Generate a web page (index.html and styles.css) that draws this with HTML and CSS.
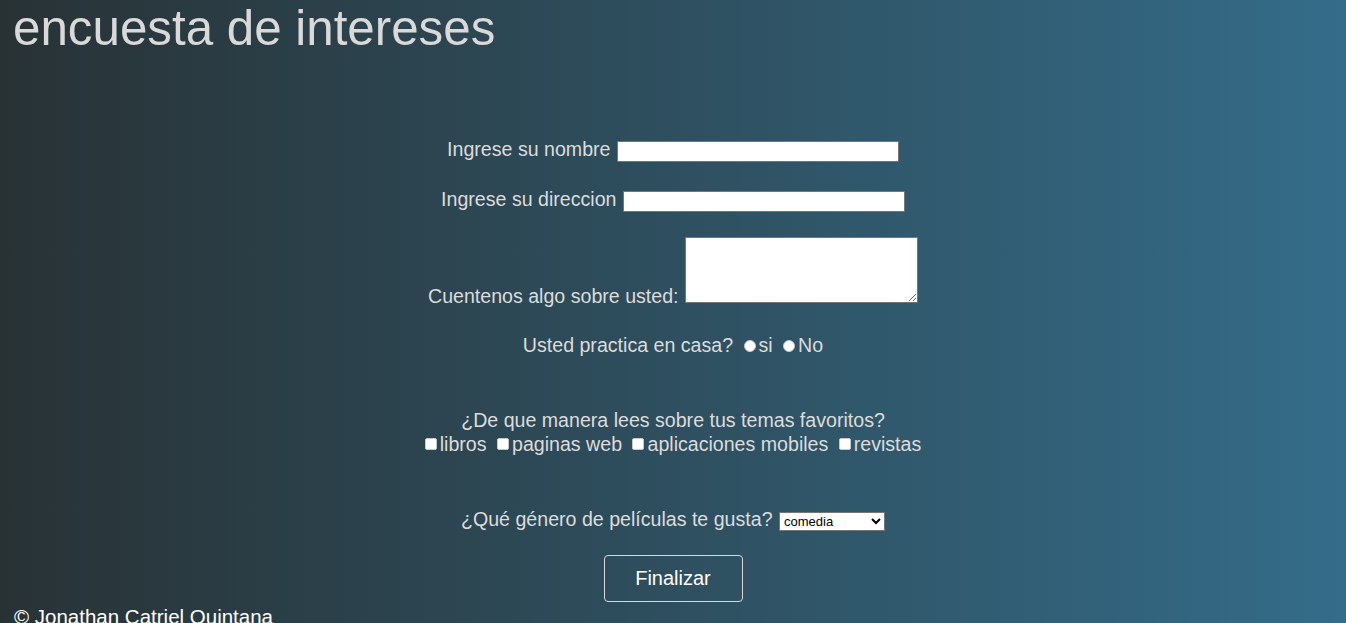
FILE: index.html
```html
<!DOCTYPE html>
<html lang="es">
<head>
<meta charset="utf-8">
<title>encuesta de intereses</title>
<link rel="stylesheet" href="styles.css">
</head>
<body>
<h1 class="title">encuesta de intereses</h1>
<form class="survey">
  <div class="row row-name">Ingrese su nombre <input class="text-in" type="text"></div>
  <div class="row row-addr">Ingrese su direccion <input class="text-in" type="text"></div>
  <div class="row row-about">Cuentenos algo sobre usted: <textarea class="about"></textarea></div>
  <div class="row row-home">Usted practica en casa? <input class="radio" type="radio" name="casa">si <input class="radio" type="radio" name="casa">No</div>
  <div class="row row-read">¿De que manera lees sobre tus temas favoritos?</div>
  <div class="row row-checks"><input class="check" type="checkbox">libros <input class="check" type="checkbox">paginas web <input class="check" type="checkbox">aplicaciones mobiles <input class="check" type="checkbox">revistas</div>
  <div class="row row-genre">¿Qué género de películas te gusta? <select class="genre"><option>comedia</option><option>drama</option><option>acción</option><option>terror</option></select></div>
  <div class="row row-btn"><button class="finish" type="button">Finalizar</button></div>
</form>
<footer class="foot">© Jonathan Catriel Quintana</footer>
</body>
</html>
```
FILE: styles.css
```css
html, body {
  margin: 0;
  padding: 0;
}
body {
  min-height: 623px;
  background: linear-gradient(to right, #283235 0%, #2e4f5f 50%, #346c89 100%);
  font-family: "Liberation Sans", Arial, sans-serif;
  color: #dcdcdc;
  overflow: hidden;
}
.title {
  margin: 0;
  padding-left: 13px;
  font-size: 49.3px;
  line-height: 55px;
  font-weight: normal;
  color: #d9d9d9;
}
.survey {
  display: flex;
  flex-direction: column;
  margin-top: 83px;
}
.row {
  text-align: center;
  font-size: 19.6px;
}
.row-addr { margin-top: 26px; }
.row-about { margin-top: 25px; }
.row-home { margin-top: 26px; }
.row-read { margin-top: 52px; }
.row-checks { margin-top: 1px; }
.row-genre { margin-top: 52px; }
.row-btn { margin-top: 24px; }

.text-in {
  box-sizing: border-box;
  width: 282px;
  height: 21px;
  margin: 0 0 0 1px;
  border: 1px solid #767676;
  background: #fff;
  padding: 1px 2px;
}
.about {
  box-sizing: border-box;
  width: 233px;
  height: 66px;
  margin: 0 0 0 1px;
  border: 1px solid #767676;
  background: #fff;
}
.radio {
  appearance: none;
  -webkit-appearance: none;
  box-sizing: border-box;
  width: 12px;
  height: 12px;
  margin: 0 3px 0 5px;
  border: 1px solid #c8c8c8;
  border-radius: 50%;
  background: #fff;
}
.check {
  appearance: none;
  -webkit-appearance: none;
  box-sizing: border-box;
  width: 12px;
  height: 12px;
  margin: 0 3px 1px 5px;
  border: 1px solid #c8c8c8;
  border-radius: 2px;
  background: #fff;
}
.row-checks .check:first-child { margin-left: 0; }
.genre {
  box-sizing: border-box;
  width: 106px;
  height: 19px;
  font-family: "Liberation Sans", Arial, sans-serif;
  font-size: 13px;
  margin: 0 0 0 1px;
  border: 1px solid #767676;
  background: #fff;
  color: #000;
  border-radius: 0;
}
.finish {
  box-sizing: border-box;
  width: 139px;
  height: 47px;
  background: transparent;
  border: 1px solid #d8d8d8;
  border-radius: 4px;
  color: #fff;
  font-family: "Liberation Sans", Arial, sans-serif;
  font-size: 20px;
  padding: 0;
}
.foot {
  margin-top: 3px;
  padding-left: 14px;
  font-size: 20.5px;
  line-height: 23px;
  color: #fff;
}
```
